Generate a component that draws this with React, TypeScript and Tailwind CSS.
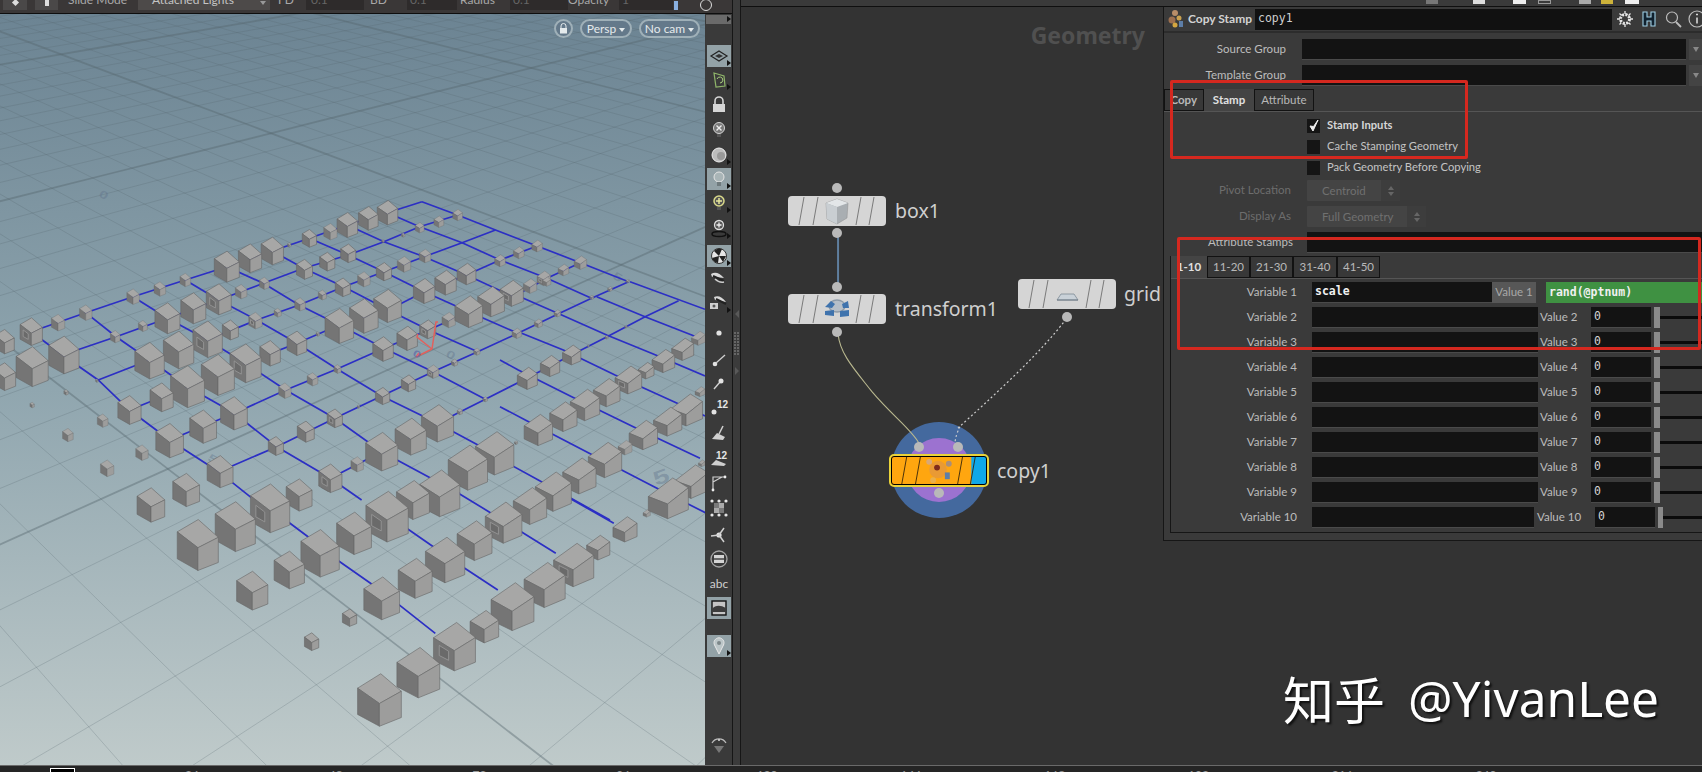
import type { ReactNode } from "react";

const ui = "[font-family:Lato,'Noto_Sans',sans-serif]";
const mono = "[font-family:'DejaVu_Sans_Mono',monospace]";

// Ground plane, fitted to the four far corners of the stamped lattice.
function makeGround(
  p0: number[],
  p1: number[],
  p2: number[],
  p3: number[],
  us: number,
  vs: number,
) {
  const dx1 = p1[0] - p2[0];
  const dx2 = p3[0] - p2[0];
  const sx = p0[0] - p1[0] + p2[0] - p3[0];
  const dy1 = p1[1] - p2[1];
  const dy2 = p3[1] - p2[1];
  const sy = p0[1] - p1[1] + p2[1] - p3[1];
  const den = dx1 * dy2 - dx2 * dy1;
  const g = (sx * dy2 - dx2 * sy) / den;
  const h = (dx1 * sy - sx * dy1) / den;
  const a = p1[0] - p0[0] + g * p1[0];
  const b = p3[0] - p0[0] + h * p3[0];
  const d = p1[1] - p0[1] + g * p1[1];
  const e = p3[1] - p0[1] + h * p3[1];
  return (u: number, v: number) => {
    const w = (g * u) / us + (h * v) / vs + 1;
    if (w < 0.12) return null;
    return [
      ((a * u) / us + (b * v) / vs + p0[0]) / w,
      ((d * u) / us + (e * v) / vs + p0[1]) / w,
    ];
  };
}

const ground = makeGround([421.9, 201.7], [678.6, 300.7], [272, 508], [31, 331.7], 6, 9);

function floorLines() {
  const out: { d: string; major: boolean }[] = [];
  for (let k = -40; k <= 40; k++) {
    const m = ((k % 10) + 10) % 10;
    for (const dir of [0, 1]) {
      const pts: string[] = [];
      for (let t = -60; t <= 60; t += 2) {
        const p = dir === 0 ? ground(k + 0.5, t) : ground(t, k + 0.5);
        if (p) pts.push(p[0].toFixed(1) + "," + p[1].toFixed(1));
      }
      if (pts.length > 1) out.push({ d: pts.join(" "), major: dir === 0 ? m === 4 : m === 9 });
    }
  }
  return out;
}

const z7 = (x: number, y: number) => [x / 2.24, 170 + y / 3];
const z8 = (x: number, y: number) => [x / 2.24, 480 + y / 3];
const z10 = (x: number, y: number) => [500 + x / 3, 280 + y / 3];

// x, y, width as read from the crops; a fourth value marks a box with an inner frame
const cubes7 = [
  [868,128,46],[825,145,44],[778,165,46],[740,185,30],[693,205,32],[648,225,8],[610,243,50],[560,265,52],[508,290,56],
  [415,330,24],[358,357,26],[298,380,28],[192,428,28],[130,458,30],[70,485,50,1],[10,515,44],
  [1025,135,22],[983,155,22],[940,173,20],[903,195,8],[858,213,6],
  [780,250,34],[733,275,34],[682,298,36],[592,340,22],[540,365,26],[490,388,56,1],[433,415,56],[375,445,56],[320,468,20],[258,500,22],
  [1203,228,24],[1162,248,24],[1120,272,24],[1300,278,28],[1262,300,24],[1218,325,30,1],
  [952,258,26],[905,283,30],[860,305,34],[815,328,28],[768,352,34],[722,375,18],[672,403,24],[622,428,16],[572,452,30,1],[516,480,36],
  [465,508,66,1],[400,540,68],[335,572,66],
  [1050,425,62],[1100,395,60],[1005,450,30],[958,478,36,1],[912,505,46],[858,537,46],
  [1045,312,42],[998,338,48],[950,363,48],[868,408,62],[815,438,64],[760,468,64],[712,492,8],[665,520,44],[605,550,46],[550,580,70,1],
  [488,615,74],[420,650,76],[362,682,52],[290,720,52],
  [1068,545,14],[1018,578,14],[970,605,26,1],[915,640,32],[857,678,32],[803,710,6],[750,745,34,1],[685,785,38],[618,828,34],
  [1087,688,10],[1030,725,12],[980,760,72],[920,800,70],[855,845,72],[800,883,28],
  [740,925,52,1],[524,730,60],[455,770,60],[380,812,62],[493,905,58],
  [756,597,16],[700,628,24],[638,662,28],[217,632,6],[1108,850,86],[1048,893,88],
  [148,667,10],[72,705,10],[230,752,24],[152,795,24],[318,848,28],[240,895,30],[10,620,50],[72,590,72],[143,555,68],
];

const cubes8 = [
  [338,75,62],[417,30,60],[605,85,88,1],[527,140,90],[443,195,92],[670,45,58],[735,10,30],[867,110,95,1],[793,160,78],
  [717,220,86],[648,270,68],[565,332,70],[985,40,90],[925,60,74],[1128,128,82,1],[1063,182,78],[997,240,88],[930,295,76],
  [855,355,80],[1285,255,90,1],[1220,315,92],[1148,380,96],[1085,440,64],[1018,500,94,1],[937,578,96],[850,660,98],
  [783,413,32],[698,485,32],[1400,148,54],[1340,203,52],
];

const cubes10 = [
  [35,40,70,1],[90,18,40],[140,5,25],[275,52,12],[330,27,14],[383,3,10],[172,100,20],[115,130,24],[50,160,28],
  [215,225,55],[150,258,58],[82,295,60],[320,338,80],[385,300,80,1],[438,272,48],[490,243,68],[548,208,66],[595,175,42],
  [255,375,88],[190,410,82],[115,450,85],[430,465,85],[503,425,85],[560,390,95],[600,335,30],[375,503,42],[315,540,100],
  [238,588,100],[160,635,108],[90,678,100],[505,655,120],[575,605,100],[605,550,20],[440,700,22],[378,140,8],[320,172,10],[265,198,6],[48,488,10],
];

const wiresD: number[][][] = [
  [[945,95],[1025,135],[1110,180],[1203,228],[1300,278],[1408,335]].map(([x, y]) => z7(x, y)),
  [[868,128],[940,170],[1035,218],[1120,270],[1225,325],[1325,385]].map(([x, y]) => z7(x, y)),
  [[778,165],[860,215],[950,260],[1045,315],[1150,380]].map(([x, y]) => z7(x, y)),
  [[693,205],[780,255],[860,305],[950,365],[1050,425],[1160,490]].map(([x, y]) => z7(x, y)),
  [[610,243],[680,295],[770,350],[870,420],[960,480],[1070,545]].map(([x, y]) => z7(x, y)),
  [[508,290],[590,340],[670,405],[760,465],[860,535],[970,605],[1087,688]].map(([x, y]) => z7(x, y)),
  [[415,330],[490,390],[575,450],[665,520],[755,597],[855,678],[980,760],[1105,850]].map(([x, y]) => z7(x, y)),
  [[298,380],[375,445],[465,510],[550,580],[640,660],[750,745],[855,845],[980,935],[1030,970]].map(([x, y]) => z7(x, y)),
  [[192,428],[260,500],[335,570],[420,650],[525,730],[620,830],[740,925],[810,990]].map(([x, y]) => z7(x, y)),
  [[70,485],[140,555],[220,630],[290,720],[380,810],[490,905],[565,985]].map(([x, y]) => z7(x, y)),
  [[390,5],[615,88]].map(([x, y]) => z10(x, y)),
  [[290,50],[435,110],[575,165],[630,188]].map(([x, y]) => z10(x, y)),
  [[60,50],[185,105],[320,165],[460,222],[615,288]].map(([x, y]) => z10(x, y)),
  [[65,160],[190,210],[345,285],[515,362],[615,408]].map(([x, y]) => z10(x, y)),
  [[0,240],[55,270],[215,350],[400,440],[600,535]].map(([x, y]) => z10(x, y)),
  [[0,380],[80,422],[265,518],[465,622],[640,710]].map(([x, y]) => z10(x, y)),
  [[15,545],[115,600],[330,720]].map(([x, y]) => z10(x, y)),
  [[1015,30],[1095,95],[1155,145],[1245,220]].map(([x, y]) => z8(x, y)),
  [[1270,50],[1375,130]].map(([x, y]) => z8(x, y)),
  [[890,125],[965,195],[1030,255],[1115,330]].map(([x, y]) => z8(x, y)),
  [[630,110],[690,170],[750,235],[830,310],[890,370],[975,460]].map(([x, y]) => z8(x, y)),
];

const wiresU: number[][][] = [
  [[945,95],[868,128],[778,165],[693,205],[610,243],[508,290],[415,330],[298,380],[192,428],[70,485]],
  [[1025,135],[940,170],[860,215],[780,255],[680,295],[590,340],[490,390],[375,445],[260,500],[140,555]],
  [[1110,180],[1035,218],[950,260],[860,305],[770,350],[670,405],[575,450],[465,510],[335,570],[220,630]],
  [[1203,228],[1120,270],[1045,315],[950,365],[870,420],[760,465],[665,520],[550,580],[420,650],[290,720]],
  [[1300,278],[1225,325],[1150,380],[1050,425],[960,480],[860,535],[755,597],[640,660],[525,730],[380,810]],
  [[1408,335],[1325,385],[1250,432],[1160,490],[1070,545],[970,605],[855,678],[750,745],[620,830],[490,905]],
  [[1520,392],[1445,440],[1360,500],[1280,555],[1180,625],[1087,688],[980,760],[855,845],[740,925]],
].map((line) => line.map(([x, y]) => z7(x, y)));

function Cube({ x, y, w, framed }: { x: number; y: number; w: number; framed?: boolean }) {
  const t = Math.max(-0.2, Math.min(1, (x - 380) / 320));
  const at = (a: number, b: number, c: number, e: number) =>
    [x + (a + (c - a) * t) * w, y + (b + (e - b) * t) * w] as const;
  const top = at(0.03, -0.6, 0.12, -0.5);
  const l = at(-0.5, -0.27, -0.5, -0.02);
  const m = at(0, 0.08, -0.02, 0.15);
  const r = at(0.5, -0.2, 0.5, -0.27);
  const b = at(0, 0.6, -0.02, 0.5);
  const bl = at(-0.5, 0.33, -0.5, 0.3);
  const br = at(0.5, 0.4, 0.5, 0.27);
  const pts = (...p: (readonly [number, number])[]) => p.map((q) => q.join(",")).join(" ");
  const inset = (q: readonly [number, number], k: number) =>
    [q[0] + (x - w * 0.25 - q[0]) * k, q[1] + (y + w * 0.12 - q[1]) * k] as const;
  return (
    <g stroke="#666" strokeWidth={w > 14 ? 0.6 : 0.3} strokeLinejoin="round">
      <polygon points={pts(top, r, m, l)} fill="#a7a7a6" />
      <polygon points={pts(l, m, b, bl)} fill="#757575" />
      <polygon points={pts(m, r, br, b)} fill="#9d9d9c" />
      {framed && (
        <polygon
          points={pts(inset(l, 0.55), inset(m, 0.55), inset(b, 0.55), inset(bl, 0.55))}
          fill="#6a6a6a"
          stroke="#9a9a9a"
          strokeWidth={0.8}
        />
      )}
    </g>
  );
}

function Scene() {
  const boxes = [
    ...cubes7.map((c) => ({ p: z7(c[0], c[1]), w: c[2] / 2.24, f: c[3] === 1 })),
    ...cubes8.map((c) => ({ p: z8(c[0], c[1]), w: c[2] / 2.24, f: c[3] === 1 })),
    ...cubes10.map((c) => ({ p: z10(c[0], c[1]), w: c[2] / 3, f: c[3] === 1 })),
  ].sort((a, b) => a.p[1] + a.w * 0.6 - (b.p[1] + b.w * 0.6));
  const toLine = (l: number[][]) => l.map((p) => p[0].toFixed(1) + "," + p[1].toFixed(1)).join(" ");

  return (
    <svg viewBox="0 14 705 751" className="block h-full w-full">
      {floorLines().map((l, i) => (
        <polyline
          key={i}
          points={l.d}
          fill="none"
          stroke="#55666e"
          strokeOpacity={l.major ? 0.42 : 0.28}
          strokeWidth={l.major ? 1.8 : 0.9}
        />
      ))}
      <g fill="#5d7088" fillOpacity={0.4} fontSize={16} fontWeight={700} fontFamily="Liberation Sans, sans-serif">
        <text transform="translate(98,196) rotate(30) scale(1,0.7)">0</text>
        <text transform="translate(207,460) rotate(30) scale(1,0.7)">5</text>
        <text transform="translate(445,356) rotate(30) scale(1,0.7)">0</text>
        <text transform="translate(656,486) rotate(-20) scale(1.3,0.9)" fontSize={22}>5</text>
        <text transform="translate(612,278) rotate(30) scale(1,0.7)">5</text>
      </g>
      <g fill="none" stroke="#2c2fc4" strokeWidth={1.7}>
        {wiresD.map((l, i) => (
          <polyline key={i} points={toLine(l)} />
        ))}
        {wiresU.map((l, i) => (
          <polyline key={i} points={toLine(l)} />
        ))}
      </g>
      {boxes.map((c, i) => (
        <Cube key={i} x={c.p[0]} y={c.p[1]} w={c.w} framed={c.f} />
      ))}
      <g fill="none" stroke="#e2605c" strokeWidth={1.5}>
        <path d="M432 349 L436 322 L438 322" />
        <path d="M432 349 L417 337 L418 334" />
        <path d="M432 349 L416 357 L419 353" />
      </g>
      <text transform="translate(412,355) rotate(30) scale(1,0.7)" fontSize={14} fontWeight={700} fill="#5b68a8" fillOpacity={0.7} fontFamily="Liberation Sans, sans-serif">
        0
      </text>
    </svg>
  );
}

function Pill({ children }: { children: ReactNode }) {
  return (
    <div className={`flex h-[19px] items-center justify-center gap-[3px] rounded-full border-2 border-[#9fb0b8] bg-[#64798a] text-[12px] text-[#e4eaec] ${ui}`}>
      {children}
      <span className="mt-[2px] h-0 w-0 border-x-[3.5px] border-t-[4px] border-x-transparent border-t-[#e4eaec]" />
    </div>
  );
}

function Viewport() {
  return (
    <div className="relative min-w-0 flex-1 bg-linear-to-b from-[#6c8493] via-[#90a6af] to-[#bfcaca]">
      <Scene />
      <div className="absolute right-[5px] top-[5px] flex items-center gap-[7px]">
        <div className="flex h-[19px] w-[19px] items-center justify-center rounded-full border-2 border-[#9fb0b8] bg-[#64798a]">
          <svg width="9" height="11" viewBox="0 0 9 11">
            <path d="M2 5V3a2.5 2.5 0 0 1 5 0v2" fill="none" stroke="#e4eaec" />
            <rect x="1" y="5" width="7" height="5.5" fill="#e4eaec" />
          </svg>
        </div>
        <div className="w-[52px]">
          <Pill>Persp</Pill>
        </div>
        <div className="w-[61px]">
          <Pill>No cam</Pill>
        </div>
      </div>
    </div>
  );
}

function Tool({ className = "", active, menu, children }: { className?: string; active?: boolean; menu?: boolean; children: ReactNode }) {
  return (
    <div className={`relative flex h-[22px] w-[24px] shrink-0 items-center justify-center ${active ? "bg-[#93a2a7]" : ""} ${className}`}>
      <svg width="20" height="20" viewBox="0 0 20 20" className="overflow-visible">
        {children}
      </svg>
      {menu && (
        <span className="absolute bottom-[1px] right-0 h-0 w-0 border-y-[3px] border-l-[4px] border-y-transparent border-l-[#111]" />
      )}
    </div>
  );
}

function Toolbar() {
  const c = "#d6d6d6";
  return (
    <div className="flex w-[27px] shrink-0 flex-col items-center bg-[#3a3a3a]">
      <div className="mt-[1px] flex h-[9px] w-[25px] justify-end bg-[#6a6a6a]">
        <span className="mt-[1px] h-0 w-0 border-y-[3.5px] border-l-[4px] border-y-transparent border-l-[#111]" />
      </div>
      <Tool className="mt-[21px]" active menu>
        <path d="M10 5 L18 10 L10 15 L2 10 Z" fill="none" stroke="#222" strokeWidth="1.2" />
        <path d="M10 8 L14 10 L10 12 L6 10 Z" fill="#333" />
      </Tool>
      <Tool className="mt-[2px]" menu>
        <path d="M5 3 L15 6 L16 16 L7 17 Z" fill="none" stroke="#8fb56a" strokeWidth="1.2" />
        <path d="M8 9a3 3 0 1 1 3 4" fill="none" stroke="#a8cf80" />
      </Tool>
      <Tool className="mt-[3px]">
        <path d="M6 9V6a4 4 0 0 1 8 0v3" fill="none" stroke={c} strokeWidth="1.6" />
        <rect x="4" y="9" width="12" height="8" fill={c} />
      </Tool>
      <Tool className="mt-[3px]">
        <circle cx="10" cy="8" r="5.5" fill="#777" stroke={c} />
        <path d="M7.5 5.5l5 5m0-5l-5 5" stroke="#eee" strokeWidth="1.4" />
        <rect x="8" y="14" width="4" height="3" fill="#555" />
      </Tool>
      <Tool className="mt-[3px]" menu>
        <circle cx="10" cy="10" r="7" fill="#bdbdbd" stroke="#eee" />
        <circle cx="12" cy="11" r="4" fill="#999" />
      </Tool>
      <Tool className="mt-[2px]" active menu>
        <circle cx="10" cy="8" r="5" fill="#a9b5b7" stroke="#e4e4e4" />
        <rect x="8" y="13" width="4" height="4" fill="#6f7a7d" />
      </Tool>
      <Tool className="mt-[2px]" menu>
        <circle cx="10" cy="8" r="5" fill="#555" stroke="#d9d98a" strokeWidth="1.5" />
        <path d="M10 5v6M7 8h6" stroke="#e6e69a" strokeWidth="1.5" />
        <rect x="8" y="14" width="4" height="3" fill="#555" />
      </Tool>
      <Tool className="mt-[4px]" menu>
        <circle cx="10" cy="6" r="4.5" fill="#555" stroke="#ddd" strokeWidth="1.3" />
        <path d="M10 3.5v5M7.5 6h5" stroke="#eee" strokeWidth="1.3" />
        <ellipse cx="10" cy="15" rx="7" ry="2.5" fill="none" stroke="#111" strokeWidth="1.5" />
      </Tool>
      <Tool className="mt-[5px]" active menu>
        <circle cx="10" cy="10" r="7.5" fill="#e6e6e6" stroke="#333" />
        <path d="M10 10 L5 5 A7.5 7.5 0 0 1 13 3 Z M10 10 L3 12 A7.5 7.5 0 0 0 9 17 Z M10 10 L17 10 L14 16 Z" fill="#222" />
      </Tool>
      <Tool>
        <path d="M2 6 Q8 2 15 10 Q8 9 3 9 Z" fill="#d8d8d8" />
        <path d="M4 8l11 5" stroke="#222" strokeWidth="2" />
        <path d="M6 11 Q10 15 15 14" fill="none" stroke="#ccc" strokeWidth="1.5" />
      </Tool>
      <Tool className="mt-[3px]" menu>
        <path d="M5 4 Q11 1 17 9 Q11 8 6 7 Z" fill="#d8d8d8" />
        <path d="M7 6l10 5" stroke="#222" strokeWidth="2" />
        <rect x="1" y="10" width="8" height="6" fill="#cfcfcf" />
        <circle cx="5" cy="13" r="1.5" fill="#555" />
      </Tool>
      <Tool className="mt-[8px]">
        <circle cx="10" cy="10" r="2.6" fill="#e2e2e2" />
      </Tool>
      <Tool className="mt-[5px]">
        <circle cx="6" cy="14" r="2.3" fill="#e2e2e2" />
        <path d="M7 13 L16 5" stroke="#d0d0d0" strokeWidth="1.4" />
      </Tool>
      <Tool className="mt-[1px]">
        <path d="M5 16 L11 9" stroke="#d0d0d0" strokeWidth="1.4" />
        <circle cx="12" cy="8" r="2.5" fill="#e2e2e2" />
      </Tool>
      <Tool className="mt-[3px]">
        <circle cx="5" cy="14" r="2.5" fill="#e2e2e2" />
        <text x="8" y="10" fontSize="10" fontWeight="700" fill="#e6e6e6" fontFamily="Liberation Sans, sans-serif">12</text>
      </Tool>
      <Tool className="mt-[3px]">
        <path d="M3 16 L8 10 L16 14 L14 17 Z" fill="#cfcfcf" />
        <path d="M10 11 L14 3" stroke="#cfcfcf" strokeWidth="1.6" />
      </Tool>
      <Tool className="mt-[4px]">
        <path d="M2 16 L7 11 L17 15 L15 17 Z" fill="#cfcfcf" />
        <text x="7" y="10" fontSize="10" fontWeight="700" fill="#e6e6e6" fontFamily="Liberation Sans, sans-serif">12</text>
      </Tool>
      <Tool className="mt-[2px]">
        <path d="M4 17 V4 H16 M4 9 L13 4" fill="none" stroke="#cfcfcf" strokeWidth="1.2" />
        <circle cx="4" cy="17" r="1.4" fill="#eee" />
        <circle cx="16" cy="4" r="1.4" fill="#eee" />
      </Tool>
      <Tool className="mt-[3px]">
        <rect x="5" y="5" width="10" height="10" fill="#7a7a7a" />
        <rect x="10" y="5" width="5" height="5" fill="#aaa" />
        <rect x="5" y="10" width="5" height="5" fill="#aaa" />
        {[3, 10, 17].flatMap((x) => [3, 17].map((y) => <circle key={`${x}${y}`} cx={x} cy={y} r="1.6" fill="#e6e6e6" />))}
      </Tool>
      <Tool className="mt-[5px]">
        <circle cx="10" cy="10" r="2.6" fill="#e6e6e6" />
        <path d="M10 10 L2 11 M10 10 L15 3 M10 10 L15 17" stroke="#d0d0d0" strokeWidth="1.5" />
      </Tool>
      <Tool className="mt-[2px]">
        <circle cx="10" cy="10" r="8" fill="none" stroke="#a5a5a5" strokeWidth="1.3" />
        <rect x="5" y="6" width="10" height="8" fill="#d4d4d4" />
        <path d="M5 10h10" stroke="#444" strokeWidth="1.5" />
      </Tool>
      <Tool className="mt-[3px]">
        <text x="10" y="14" textAnchor="middle" fontSize="12" fill="#cfcfcf" fontFamily="Lato, sans-serif">abc</text>
      </Tool>
      <Tool className="mt-[2px]" active>
        <rect x="3" y="3" width="14" height="14" fill="#c4c4c4" stroke="#111" strokeWidth="1.4" />
        <path d="M3 11 Q8 5 17 10 V14 H3 Z" fill="#3c3c3c" />
      </Tool>
      <Tool className="mt-[16px]" active menu>
        <path d="M10 18 L5.5 9 A5 5 0 1 1 14.5 9 Z" fill="#bcc6c8" stroke="#e8e8e8" />
        <circle cx="10" cy="7" r="2" fill="#7c8789" />
      </Tool>
      <Tool className="mt-[77px]">
        <path d="M3 8 A8 8 0 0 1 17 8" fill="none" stroke="#bdbdbd" strokeWidth="1.2" />
        <circle cx="10" cy="5" r="1" fill="#ddd" />
        <path d="M5 11 H15 L10 18 Z" fill="#777" />
      </Tool>
    </div>
  );
}

function TopBar() {
  const labelCls = "text-[12px] text-[#a8a8a8]";
  return (
    <div className="h-[14px] shrink-0 overflow-hidden border-b border-[#0e0e0e] bg-[#3a3737]">
      <div className={`-mt-[10px] flex h-[20px] items-center ${ui}`}>
        <div className="ml-[3px] flex h-[20px] w-[24px] items-center justify-center bg-[#4a4848] text-[#ddd]">
          <span className="mt-[4px] h-[5px] w-[5px] rotate-45 bg-[#ddd]" />
        </div>
        <div className="ml-[8px] flex h-[20px] w-[23px] items-center justify-center bg-[#4a4848]">
          <span className="mt-[5px] h-[6px] w-[4px] bg-[#ddd]" />
        </div>
        <span className={`ml-[10px] w-[70px] ${labelCls}`}>Slide Mode</span>
        <div className="flex h-[20px] w-[132px] items-center bg-[#4d4a49] pl-[14px] text-[12px] text-[#c4c4c4]">
          Attached Lights
          <span className="ml-auto mr-[4px] mt-[6px] h-0 w-0 border-x-[3px] border-t-[4px] border-x-transparent border-t-[#999]" />
        </div>
        <span className={`ml-[8px] w-[28px] ${labelCls}`}>FD</span>
        <div className="flex h-[20px] w-[58px] items-center bg-[#2e2b2b] pl-[5px] text-[12px] text-[#666]">0.1</div>
        <span className={`ml-[6px] w-[37px] ${labelCls}`}>BD</span>
        <div className="flex h-[20px] w-[50px] items-center bg-[#2e2b2b] pl-[3px] text-[12px] text-[#666]">0.1</div>
        <span className={`ml-[3px] w-[50px] ${labelCls}`}>Radius</span>
        <div className="flex h-[20px] w-[58px] items-center bg-[#2e2b2b] pl-[3px] text-[12px] text-[#666]">0.1</div>
        <span className={`w-[51px] ${labelCls}`}>Opacity</span>
        <div className="flex h-[20px] w-[54px] items-center bg-[#2e2b2b] pl-[3px] text-[12px] text-[#666]">1</div>
        <span className="ml-[1px] mt-[10px] h-[9px] w-[4px] bg-[#8ab0e0]" />
        <span className="ml-[22px] mt-[10px] h-[12px] w-[12px] rounded-full border border-[#ddd]" />
      </div>
    </div>
  );
}

function Divider() {
  return (
    <div className="flex w-[9px] shrink-0 flex-col items-center border-x border-[#161616] bg-[#3b3b3b]">
      <span className="mt-[310px] h-0 w-0 border-y-[4px] border-r-[4px] border-y-transparent border-r-[#595959]" />
      <div className="mt-[14px] grid grid-cols-2 gap-[1px]">
        {Array.from({ length: 16 }).map((_, i) => (
          <span key={i} className="h-[2px] w-[2px] bg-[#666]" />
        ))}
      </div>
      <span className="mt-[12px] h-0 w-0 border-y-[4px] border-l-[4px] border-y-transparent border-l-[#595959]" />
    </div>
  );
}

function NodeBody({ children, selected }: { children: ReactNode; selected?: boolean }) {
  const stroke = selected ? "#33230a" : "#6f6f6f";
  return (
    <div
      className={
        selected
          ? "relative h-[33px] w-[100px] shrink-0 overflow-hidden rounded-[5px] border-2 border-[#e9d33a] bg-[#ffa60f] outline outline-1 -outline-offset-3 outline-black"
          : "relative h-[30px] w-[98px] shrink-0 overflow-hidden rounded-[4px] bg-[#d5d5d5]"
      }
    >
      <svg viewBox="0 0 98 30" className="h-full w-full" preserveAspectRatio="none">
        {selected && <rect x="82" y="0" width="16" height="30" fill="#0fa8e8" />}
        {[13, 27, 70, 83].map((x) => (
          <path key={x} d={`M${x + 3} 1 L${x - 2} 29`} stroke={stroke} strokeWidth="0.9" />
        ))}
        {children}
      </svg>
    </div>
  );
}

const Label = ({ children }: { children: ReactNode }) => (
  <span className="whitespace-nowrap text-[19.5px] leading-none text-[#cfcfcf] [font-family:'Noto_Sans',sans-serif]">
    {children}
  </span>
);

const Dot = ({ className }: { className: string }) => (
  <span className={`absolute h-[10px] w-[10px] rounded-full bg-[#b9b9b9] ${className}`} />
);

function NetworkCanvas() {
  return (
    <div className="relative min-w-0 flex-1 overflow-hidden bg-[#333333]">
      <div className="absolute right-[18px] top-[13px] text-[23px] font-bold leading-[30px] text-[#505050] [font-family:'Noto_Sans',sans-serif]">
        Geometry
      </div>

      <div className="absolute left-[150px] top-[415px] flex h-[96px] w-[96px] items-center justify-center rounded-full bg-[#44699e]">
        <div className="h-[64px] w-[64px] rounded-full bg-[#9c72d0]" />
      </div>

      <svg className="absolute left-0 top-0 h-full w-full" viewBox="0 0 422 765">
        <path d="M96 225 V282" stroke="#5f7f9f" strokeWidth="2" fill="none" />
        <path d="M96 330 C98 350 112 365 130 388 C150 412 172 428 178 441" stroke="#b9b88f" strokeWidth="1.1" fill="none" />
        <path d="M326 315 C300 350 250 395 217 425 C222 420 215 428 214 440" stroke="#cfcfcf" strokeWidth="1.2" strokeDasharray="2 2.5" fill="none" />
      </svg>

      <div className="absolute left-[47px] top-[189px] flex items-center gap-[9px]">
        <NodeBody>
          <path d="M38 7 L49 3 L60 7 L59 22 L49 28 L39 23 Z" fill="#a9aeb2" stroke="#8f8f8f" strokeWidth="0.5" />
          <path d="M38 7 L49 11 L60 7 L49 3 Z" fill="#e3e6e8" />
          <path d="M49 11 L49 28 L39 23 L38 7 Z" fill="#c9ced2" />
        </NodeBody>
        <Label>box1</Label>
      </div>
      <div className="absolute left-[47px] top-[287px] flex items-center gap-[9px]">
        <NodeBody>
          <ellipse cx="49" cy="12" rx="8" ry="6" fill="#b6bfc8" stroke="#8c9aa8" strokeWidth="1.4" />
          <path d="M37 13 L43 7 L47 10 L44 14 Z M54 10 L60 7 L61 14 L55 14 Z M37 17 L46 16 L46 22 L37 21 Z M52 17 L61 16 L61 22 L52 23 Z" fill="#3f73ad" />
        </NodeBody>
        <Label>transform1</Label>
      </div>
      <div className="absolute left-[277px] top-[272px] flex items-center gap-[8px]">
        <NodeBody>
          <path d="M39 21 L43 15 L56 15 L60 21 Z" fill="#c9d1d8" stroke="#7e8b96" strokeWidth="0.8" />
          <path d="M39 21 L60 21" stroke="#6e7b86" strokeWidth="1" />
        </NodeBody>
        <Label>grid</Label>
      </div>
      <div className="absolute left-[148px] top-[447px] flex items-center gap-[8px]">
        <NodeBody selected>
          <circle cx="48" cy="14" r="9" fill="#e99a34" />
          <circle cx="39" cy="6" r="3" fill="#d8a878" />
          <circle cx="59" cy="8" r="3" fill="#a98e7a" />
          <circle cx="47" cy="12" r="3" fill="#7f2c1c" />
          <rect x="55" y="17" width="5" height="7" fill="#5d7ea8" />
          <circle cx="43" cy="25" r="3" fill="#eab04c" />
        </NodeBody>
        <Label>copy1</Label>
      </div>

      <Dot className="left-[91px] top-[176px]" />
      <Dot className="left-[91px] top-[221px]" />
      <Dot className="left-[91px] top-[275px]" />
      <Dot className="left-[91px] top-[320px]" />
      <Dot className="left-[321px] top-[305px]" />
      <Dot className="left-[173px] top-[435px]" />
      <Dot className="left-[212px] top-[435px]" />
      <Dot className="left-[193px] top-[481px]" />
    </div>
  );
}

function Field({ className = "", children }: { className?: string; children?: ReactNode }) {
  return (
    <div className={`flex h-[21px] shrink-0 items-center border-b border-[#4a4a4a] bg-[#131313] ${className}`}>
      {children}
    </div>
  );
}

function VarRow({ n, wide }: { n: number; wide?: boolean }) {
  return (
    <div className="flex h-[21px] items-center text-[11.5px] text-[#bdbdbd]">
      <span className="w-[126px] shrink-0 pb-[2px] text-right">Variable {n}</span>
      <Field className={wide ? "ml-[15px] w-[222px]" : "ml-[15px] w-[226px]"} />
      <span className={wide ? "ml-[3px] w-[58px] shrink-0 pb-[2px]" : "ml-[2px] w-[51px] shrink-0 pb-[2px]"}>Value {n}</span>
      <Field className={`w-[60px] pl-[3px] text-[11.5px] text-[#d4d4d4] ${mono}`}>0</Field>
      <span className={wide ? "ml-[3px] h-[21px] w-[5px] shrink-0 bg-[#8a8a8a]" : "ml-[3px] h-[21px] w-[6px] shrink-0 bg-[#8a8a8a]"} />
      <span className="h-[3px] flex-1 bg-[#0b0b0b]" />
    </div>
  );
}

function TabBtn({ label, active, strong, className = "" }: { label: string; active?: boolean; strong?: boolean; className?: string }) {
  return (
    <div
      className={`flex h-[22px] shrink-0 items-center justify-center overflow-hidden text-[11.5px] ${
        active ? "bg-[#444] text-[#e0e0e0]" : "border border-[#121212] bg-[#383838] text-[#b8b8b8]"
      } ${strong ? "font-bold" : ""} ${className}`}
    >
      {label}
    </div>
  );
}

function CheckRow({ label, checked, className = "" }: { label: string; checked?: boolean; className?: string }) {
  return (
    <div className={`ml-[143px] flex h-[14px] items-center gap-[7px] ${className}`}>
      <span className="flex h-[14px] w-[13px] items-center justify-center bg-[#151515]">
        {checked && (
          <svg width="12" height="14" viewBox="0 0 12 14">
            <path d="M2 7 L5 12 L10 1 L5.5 7.5 Z" fill="#eee" stroke="#eee" />
          </svg>
        )}
      </span>
      <span className={checked ? "pb-[2px] text-[11.2px] font-bold text-[#d6d6d6]" : "pb-[2px] text-[11.2px] text-[#c4c4c4]"}>{label}</span>
    </div>
  );
}

function Spinner({ label, name, widthCls, className = "", textW }: { label: string; name: string; widthCls: string; className?: string; textW: string }) {
  return (
    <div className={`flex h-[21px] items-center ${className}`}>
      <span className={`shrink-0 pb-[2px] text-right text-[11.5px] text-[#6d6d6d] ${textW}`}>{label}</span>
      <div className={`ml-[16px] flex h-[21px] items-center rounded-[1px] bg-[#444] pl-[15px] text-[11.5px] text-[#707070] ${widthCls}`}>
        {name}
        <span className="ml-auto flex h-full w-[19px] flex-col items-center justify-center gap-[2px] bg-[#3d3d3d]">
          <span className="h-0 w-0 border-x-[3px] border-b-[4px] border-x-transparent border-b-[#666]" />
          <span className="h-0 w-0 border-x-[3px] border-t-[4px] border-x-transparent border-t-[#666]" />
        </span>
      </div>
    </div>
  );
}

function ParamPanel() {
  return (
    <div className={`relative h-[534px] w-[539px] shrink-0 border-b border-l border-[#161616] bg-[#3a3a3a] ${ui}`}>
      {/* Header */}
      <div className="flex h-[26px] items-center border-b-2 border-[#2c2c2c]">
        <svg width="20" height="22" viewBox="0 0 20 22" className="ml-[3px] shrink-0">
          <circle cx="8" cy="5" r="3" fill="#b88d68" />
          <circle cx="5" cy="12" r="3.5" fill="#9c6f4f" />
          <circle cx="12" cy="10" r="2.5" fill="#c9a04f" />
          <rect x="12" y="13" width="4" height="6" fill="#5d7ea8" />
          <circle cx="8" cy="17" r="2.5" fill="#d4a640" />
        </svg>
        <span className="ml-[1px] w-[67px] shrink-0 text-[12px] font-bold text-[#d2d2d2]">Copy Stamp</span>
        <div className={`flex h-[21px] w-[357px] shrink-0 items-center bg-[#111] pl-[3px] text-[11.5px] text-[#cfcfcf] ${mono}`}>copy1</div>
        <svg width="18" height="18" viewBox="0 0 18 18" className="ml-[4px] shrink-0">
          <circle cx="9" cy="9" r="4.5" fill="none" stroke="#e6e6e6" strokeWidth="3" strokeDasharray="2.2 1.3" />
          <path d="M9 1v16M1 9h16M3.5 3.5l11 11M14.5 3.5l-11 11" stroke="#e6e6e6" strokeWidth="1.3" strokeDasharray="3 10" />
        </svg>
        <svg width="18" height="18" viewBox="0 0 18 18" className="ml-[6px] shrink-0">
          <path d="M3 2h4v5h4V2h4v14h-4v-5H7v5H3z" fill="#10212e" stroke="#9fd0e6" strokeWidth="1.1" />
        </svg>
        <svg width="18" height="18" viewBox="0 0 18 18" className="ml-[6px] shrink-0">
          <circle cx="8" cy="7.5" r="5.5" fill="none" stroke="#bdbdbd" strokeWidth="1.2" />
          <path d="M12 12l5 5" stroke="#bdbdbd" strokeWidth="1.8" />
        </svg>
        <svg width="18" height="18" viewBox="0 0 18 18" className="ml-[6px] shrink-0">
          <circle cx="9" cy="9" r="8" fill="none" stroke="#bdbdbd" strokeWidth="1.2" />
          <path d="M9 7.5v6M8 4.5h2" stroke="#d8d8d8" strokeWidth="1.6" />
        </svg>
      </div>

      <div className="mt-[6px] flex h-[21px] items-center text-[11.5px] text-[#bdbdbd]">
        <span className="w-[122px] shrink-0 pb-[2px] text-right">Source Group</span>
        <Field className="ml-[16px] w-[384px]" />
        <span className="ml-[3px] flex h-[21px] flex-1 items-center justify-center bg-[#444]">
          <span className="h-0 w-0 border-x-[3px] border-t-[5px] border-x-transparent border-t-[#888]" />
        </span>
      </div>
      <div className="mt-[5px] flex h-[21px] items-center text-[11.5px] text-[#bdbdbd]">
        <span className="w-[122px] shrink-0 pb-[2px] text-right">Template Group</span>
        <Field className="ml-[16px] w-[384px]" />
        <span className="ml-[3px] flex h-[21px] flex-1 items-center justify-center bg-[#444]">
          <span className="h-0 w-0 border-x-[3px] border-t-[5px] border-x-transparent border-t-[#888]" />
        </span>
      </div>

      {/* Copy / Stamp / Attribute */}
      <div className="mt-[3px] flex border-b border-[#555]">
        <TabBtn label="Copy" strong className="w-[40px] justify-end pr-[6px]" />
        <TabBtn label="Stamp" active strong className="w-[50px]" />
        <TabBtn label="Attribute" className="w-[60px]" />
      </div>
      <CheckRow label="Stamp Inputs" checked className="mt-[7px]" />
      <CheckRow label="Cache Stamping Geometry" className="mt-[7px]" />
      <CheckRow label="Pack Geometry Before Copying" className="mt-[7px]" />
      <Spinner label="Pivot Location" name="Centroid" widthCls="w-[93px]" textW="w-[127px]" className="mt-[5px]" />
      <Spinner label="Display As" name="Full Geometry" widthCls="w-[119px]" textW="w-[127px]" className="mt-[5px]" />
      <div className="mt-[5px] flex h-[21px] items-center text-[11.5px] text-[#bdbdbd]">
        <span className="w-[129px] shrink-0 pb-[2px] text-right">Attribute Stamps</span>
        <Field className="ml-[14px] flex-1 shrink" />
      </div>

      {/* Variable pages */}
      <div className="ml-[6px] mt-[3px] flex h-[277px] flex-col border-b border-l border-[#161616]">
        <div className="flex border-b border-[#555]">
          <TabBtn label="1-10" active strong className="w-[36px]" />
          <TabBtn label="11-20" className="w-[43px]" />
          <TabBtn label="21-30" className="w-[43px]" />
          <TabBtn label="31-40" className="w-[44px]" />
          <TabBtn label="41-50" className="w-[43px]" />
        </div>
        <div className="mt-[3px] flex flex-col gap-[4px]">
          <div className="flex h-[21px] items-center text-[11.5px] text-[#bdbdbd]">
            <span className="w-[126px] shrink-0 pb-[2px] text-right">Variable 1</span>
            <Field className={`ml-[15px] w-[180px] pl-[3px] text-[11.5px] font-bold text-[#f0f0f0] ${mono}`}>scale</Field>
            <span className="flex h-[21px] w-[44px] shrink-0 items-center justify-center bg-[#575757] pb-[2px] text-[#a8a8a8]">Value 1</span>
            <div className={`ml-[10px] flex h-[21px] flex-1 items-center bg-[#3f9142] pl-[3px] text-[11.5px] font-bold text-[#f0f0f0] ${mono}`}>
              rand(@ptnum)
            </div>
          </div>
          {[2, 3, 4, 5, 6, 7, 8, 9].map((n) => (
            <VarRow key={n} n={n} />
          ))}
          <VarRow n={10} wide />
        </div>
      </div>

      {/* Annotation frames drawn on top of the screenshot */}
      <div className="absolute left-[6px] top-[73px] h-[79px] w-[298px] rounded-[2px] border-[3px] border-[#d5281f]" />
      <div className="absolute left-[13px] top-[230px] h-[113px] w-[524px] rounded-[2px] border-[3px] border-[#d5281f]" />
    </div>
  );
}

function NetworkStrip() {
  const marks = [
    "ml-[685px] w-[12px] bg-[#777]",
    "ml-[35px] w-[12px] bg-[#ddd]",
    "ml-[28px] w-[13px] bg-[#eee]",
    "ml-[12px] w-[13px] border border-[#999]",
    "ml-[28px] w-[12px] bg-[#aaa]",
    "ml-[10px] w-[12px] bg-[#cdb23a]",
    "ml-[12px] w-[14px] bg-[#eee]",
  ];
  return (
    <div className="flex h-[7px] shrink-0 border-b border-[#0f0f0f] bg-[#3a3a3a]">
      {marks.map((c, i) => (
        <span key={i} className={`h-[4px] shrink-0 ${c}`} />
      ))}
    </div>
  );
}

export default function App() {
  const ticks = ["24", "48", "72", "96", "120", "144", "168", "192", "216", "240"];
  return (
    <div className="relative flex h-[772px] w-[1702px] flex-col overflow-hidden bg-[#333333]">
      <div className="flex min-h-0 flex-1">
        <div className="flex w-[732px] shrink-0 flex-col">
          <TopBar />
          <div className="flex min-h-0 flex-1">
            <Viewport />
            <Toolbar />
          </div>
        </div>
        <Divider />
        <div className="flex min-w-0 flex-1 flex-col">
          <NetworkStrip />
          <div className="flex min-h-0 flex-1">
            <NetworkCanvas />
            <div className="flex flex-col">
              <ParamPanel />
            </div>
          </div>
        </div>
      </div>

      {/* Playbar, only its top edge is in frame */}
      <div className={`flex h-[7px] shrink-0 overflow-hidden border-t border-[#6a6a6a] bg-[#252525] ${ui}`}>
        <div className="ml-[50px] mt-[2px] h-[8px] w-[25px] shrink-0 border border-white bg-black" />
        <div className="ml-[45px] flex">
          {ticks.map((t) => (
            <span key={t} className="w-[143.8px] shrink-0 text-center text-[12px] leading-[18px] text-[#999]">
              {t}
            </span>
          ))}
        </div>
      </div>

      <div className="absolute left-[1283px] top-[666px] flex items-center whitespace-nowrap text-[49.6px] leading-[64px] text-white [font-family:'Noto_Sans','Noto_Sans_CJK_SC',sans-serif] [text-shadow:2px_2px_2px_#111]">
        <span className="text-[51px] [font-family:'Noto_Sans_CJK_SC',sans-serif]">知乎</span>
        <span className="ml-[23px]">@YivanLee</span>
      </div>
    </div>
  );
}
